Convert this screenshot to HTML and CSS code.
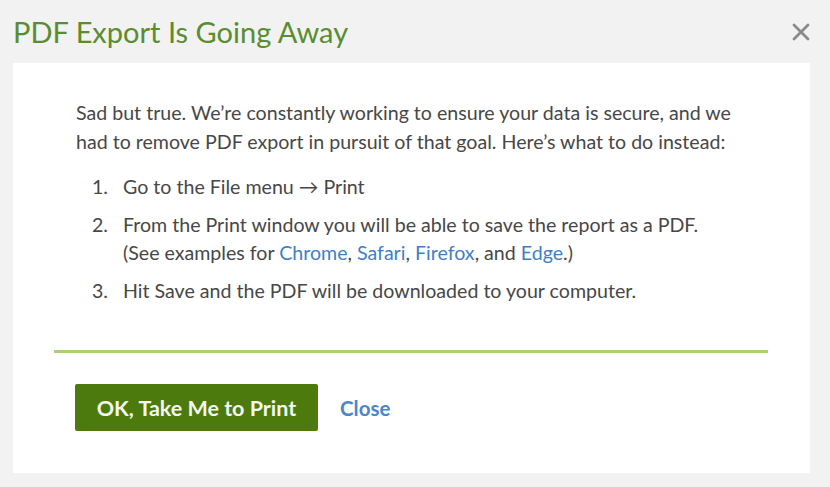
FILE: index.html
```html
<!DOCTYPE html>
<html>
<head>
<meta charset="utf-8">
<link rel="stylesheet" href="styles.css">
</head>
<body>
<div class="modal">
  <div class="modal-header">
    <h1 class="modal-title">PDF Export Is Going Away</h1>
    <button class="close-x" aria-label="Close">
      <svg width="20" height="20" viewBox="0 0 20 20"><path d="M3 3 L17 17 M17 3 L3 17" stroke="#8a8a8a" stroke-width="2.8" stroke-linecap="round"/></svg>
    </button>
  </div>
  <div class="modal-card">
    <div class="modal-body">
      <p class="intro">Sad but true. We’re constantly working to ensure your data is secure, and we had to remove PDF export in pursuit of that goal. Here’s what to do instead:</p>
      <ol class="steps">
        <li>Go to the File menu → Print</li>
        <li>From the Print window you will be able to save the report as a PDF. (See examples for <a href="#">Chrome</a>, <a href="#">Safari</a>, <a href="#">Firefox</a>, and <a href="#">Edge</a>.)</li>
        <li>Hit Save and the PDF will be downloaded to your computer.</li>
      </ol>
    </div>
    <div class="divider"></div>
    <div class="modal-footer">
      <button class="btn-primary">OK, Take Me to Print</button>
      <a href="#" class="link-close">Close</a>
    </div>
  </div>
</div>
</body>
</html>
```
FILE: styles.css
```css
html, body {
  margin: 0;
  padding: 0;
  background: #f2f2f2;
}
body {
  font-family: Lato, "Open Sans", sans-serif;
  width: 830px;
  height: 487px;
  overflow: hidden;
}
.modal {
  padding: 0 20px 0 13px;
}
.modal-header {
  display: flex;
  align-items: center;
  justify-content: space-between;
  height: 63px;
}
.modal-title {
  margin: 0;
  font-size: 29px;
  font-weight: 400;
  color: #5b8c2f;
  line-height: 1;
}
.close-x {
  border: none;
  background: none;
  padding: 0;
  margin-right: -1px;
  display: flex;
}
.modal-card {
  background: #fff;
  height: 410px;
  box-sizing: border-box;
  padding: 35px 42px 0 41px;
}
.modal-body {
  padding: 0 33px 0 22px;
  color: #474747;
  font-size: 19.6px;
  line-height: 29px;
}
.intro {
  margin: 0 0 17px 0;
}
.steps {
  margin: 0;
  padding: 0 0 0 47px;
}
.steps li {
  margin-bottom: 10px;
  line-height: 28px;
}
.steps li:last-child {
  margin-bottom: 0;
}
.steps li::marker {
  content: counter(list-item) ".\00a0\00a0\00a0";
  color: #474747;
}
.steps a, .link-close {
  color: #3f7fc6;
  text-decoration: none;
}
.divider {
  height: 3px;
  background: #a9d174;
  margin-top: 45px;
}
.modal-footer {
  display: flex;
  align-items: center;
  padding: 31px 0 0 21px;
  gap: 22px;
}
.btn-primary {
  font-family: Lato, sans-serif;
  background: #4c7a0c;
  color: #f4f7ee;
  font-weight: 700;
  font-size: 21.5px;
  border: none;
  border-radius: 2px;
  height: 47px;
  width: 243px;
  padding: 0;
}
.link-close {
  font-size: 20.5px;
  font-weight: 700;
  color: #4a86c8;
}
```
